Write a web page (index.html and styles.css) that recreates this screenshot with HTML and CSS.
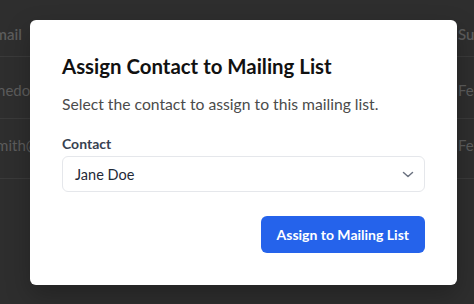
FILE: index.html
```html
<!DOCTYPE html>
<html lang="en">
<head>
<meta charset="utf-8">
<title>Assign Contact</title>
<link rel="stylesheet" href="styles.css">
</head>
<body>
<div class="page">
  <table class="bg-table">
    <thead>
      <tr><th class="c-email">Email</th><th class="c-mid"></th><th class="c-sub">Subscribed</th></tr>
    </thead>
    <tbody>
      <tr class="row-a"><td class="c-email">janedoe@example.com</td><td class="c-mid"></td><td class="c-sub">Feb 12, 2024</td></tr>
      <tr class="row-b"><td class="c-email">jsmith@example.com</td><td class="c-mid"></td><td class="c-sub">Feb 20, 2024</td></tr>
    </tbody>
  </table>
</div>
<div class="modal" role="dialog">
  <h2 class="modal-title">Assign Contact to Mailing List</h2>
  <p class="modal-desc">Select the contact to assign to this mailing list.</p>
  <div class="field">
    <label class="field-label">Contact</label>
    <div class="select">
      <span class="select-value">Jane Doe</span>
      <svg class="chevron" width="16" height="16" viewBox="0 0 16 16" fill="none"><path d="M3.5 6.5 L8 10.5 L12.5 6.5" stroke="#6b7280" stroke-width="1.5" stroke-linecap="round" stroke-linejoin="round"/></svg>
    </div>
  </div>
  <div class="actions">
    <button class="btn-primary">Assign to Mailing List</button>
  </div>
</div>
</body>
</html>
```
FILE: styles.css
```css
html, body {
  margin: 0;
  padding: 0;
}
body {
  width: 474px;
  height: 304px;
  overflow: hidden;
  background: #2e2e2e;
  font-family: "Lato", "Open Sans", sans-serif;
  position: relative;
}
.page {
  width: 474px;
  height: 304px;
  overflow: hidden;
}
.bg-table {
  border-collapse: collapse;
  table-layout: fixed;
  width: 560px;
  margin-left: -14px;
  color: #5c5c5c;
  font-size: 15px;
  white-space: nowrap;
}
.bg-table th,
.bg-table td {
  text-align: left;
  padding: 0;
  vertical-align: top;
  border-bottom: 1px solid #3a3a3a;
  line-height: 20px;
  overflow: hidden;
}
.bg-table th {
  font-weight: 600;
  height: 56px;
  padding-top: 24px;
  box-sizing: border-box;
}
.row-a td {
  height: 62px;
  padding-top: 23px;
  box-sizing: border-box;
}
.row-b td {
  height: 60px;
  padding-top: 16px;
  box-sizing: border-box;
}
.c-email { width: 160px; }
.c-mid { width: 312px; }
.c-sub { width: 88px; }

.modal {
  position: absolute;
  left: 30px;
  top: 20px;
  width: 363px;
  padding: 32px;
  background: #ffffff;
  border-radius: 6px;
  box-shadow: 0 10px 25px rgba(0,0,0,0.25);
}
.modal-title {
  margin: 0;
  font-size: 20.4px;
  line-height: 28px;
  font-weight: 700;
  color: #111111;
}
.modal-desc {
  margin: 12px 0 18px;
  font-size: 15.7px;
  line-height: 24px;
  color: #4b4b4b;
}
.field-label {
  display: block;
  font-size: 14px;
  line-height: 20px;
  font-weight: 700;
  color: #374151;
  margin-bottom: 2px;
}
.select {
  height: 34px;
  border: 1px solid #e5e7eb;
  border-radius: 6px;
  display: flex;
  align-items: center;
  justify-content: space-between;
  padding: 0 8px 0 12px;
}
.select-value {
  font-size: 14.5px;
  color: #1f2937;
}
.chevron {
  display: block;
}
.actions {
  margin-top: 24px;
  display: flex;
  justify-content: flex-end;
}
.btn-primary {
  height: 37px;
  padding: 0 16px;
  border: none;
  border-radius: 6px;
  background: #2563eb;
  color: #ffffff;
  font-family: inherit;
  font-size: 14px;
  font-weight: 700;
}
```
